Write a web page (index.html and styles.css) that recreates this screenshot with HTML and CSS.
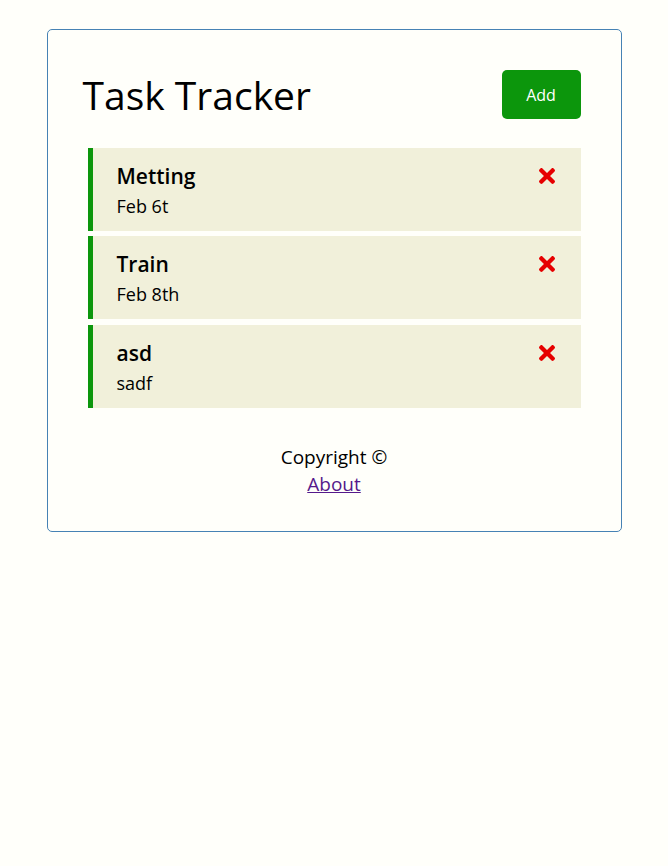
FILE: index.html
```html
<!DOCTYPE html>
<html lang="en">

<head>
    <meta charset="UTF-8" />
    <meta name="viewport" content="width=device-width, initial-scale=1.0" />
    <title>Task Tracker</title>
    <link rel="stylesheet" href="styles.css">
</head>

<body>
    <div class="container">
        <header class="header">
            <h1>Task Tracker</h1>
            <button class="btn">Add</button>
        </header>
        <div class="task">
            <h3>Metting
                <svg class="del" viewBox="0 80 352 352"><path d="M242.72 256l100.07-100.07c12.28-12.28 12.28-32.19 0-44.48l-22.24-22.24c-12.28-12.28-32.19-12.28-44.48 0L176 189.28 75.93 89.21c-12.28-12.28-32.19-12.28-44.48 0L9.21 111.45c-12.28 12.28-12.28 32.19 0 44.48L109.28 256 9.21 356.07c-12.28 12.28-12.28 32.19 0 44.48l22.24 22.24c12.28 12.28 32.2 12.28 44.48 0L176 322.72l100.07 100.07c12.28 12.28 32.2 12.28 44.48 0l22.24-22.24c12.28-12.28 12.28-32.19 0-44.48L242.72 256z"/></svg>
            </h3>
            <p>Feb 6t</p>
        </div>
        <div class="task">
            <h3>Train
                <svg class="del" viewBox="0 80 352 352"><path d="M242.72 256l100.07-100.07c12.28-12.28 12.28-32.19 0-44.48l-22.24-22.24c-12.28-12.28-32.19-12.28-44.48 0L176 189.28 75.93 89.21c-12.28-12.28-32.19-12.28-44.48 0L9.21 111.45c-12.28 12.28-12.28 32.19 0 44.48L109.28 256 9.21 356.07c-12.28 12.28-12.28 32.19 0 44.48l22.24 22.24c12.28 12.28 32.2 12.28 44.48 0L176 322.72l100.07 100.07c12.28 12.28 32.2 12.28 44.48 0l22.24-22.24c12.28-12.28 12.28-32.19 0-44.48L242.72 256z"/></svg>
            </h3>
            <p>Feb 8th</p>
        </div>
        <div class="task">
            <h3>asd
                <svg class="del" viewBox="0 80 352 352"><path d="M242.72 256l100.07-100.07c12.28-12.28 12.28-32.19 0-44.48l-22.24-22.24c-12.28-12.28-32.19-12.28-44.48 0L176 189.28 75.93 89.21c-12.28-12.28-32.19-12.28-44.48 0L9.21 111.45c-12.28 12.28-12.28 32.19 0 44.48L109.28 256 9.21 356.07c-12.28 12.28-12.28 32.19 0 44.48l22.24 22.24c12.28 12.28 32.2 12.28 44.48 0L176 322.72l100.07 100.07c12.28 12.28 32.2 12.28 44.48 0l22.24-22.24c12.28-12.28 12.28-32.19 0-44.48L242.72 256z"/></svg>
            </h3>
            <p>sadf</p>
        </div>
        <footer class="footer">
            <p>Copyright &copy;</p>
            <a href="#about">About</a>
        </footer>
    </div>
</body>

</html>
```

FILE: styles.css
```css
* {
    box-sizing: border-box;
    margin: 0;
    padding: 0;
}

body {
    font-family: "Open Sans", "DejaVu Sans", sans-serif;
    background: #fffffa;
    color: #000;
}

.container {
    width: 575px;
    margin: 29px auto 0;
    padding: 35px 35px 33px;
    border: 1px solid #4682b4;
    border-radius: 5px;
}

.header {
    display: flex;
    justify-content: space-between;
    align-items: center;
    margin-bottom: 24px;
}

.header h1 {
    font-size: 39px;
    font-weight: 500;
    line-height: 58px;
}

.btn {
    margin: 5px;
    width: 79px;
    height: 49px;
    border: none;
    border-radius: 5px;
    background: #0c960c;
    color: #fff;
    font-family: inherit;
    font-size: 16px;
    cursor: pointer;
}

.task {
    margin: 5px;
    height: 83px;
    padding: 14px 26px 0 24px;
    background: #f1f0da;
    border-left: 5px solid #0c960c;
}

.task:nth-of-type(2) {
    margin-bottom: 6px;
}

.task h3 {
    display: flex;
    justify-content: space-between;
    align-items: center;
    font-size: 21px;
    font-weight: 600;
    line-height: 28px;
}

.task p {
    margin-top: 3px;
    font-size: 18px;
    line-height: 26px;
}

.del {
    width: 16px;
    height: 16px;
    fill: #e60000;
    cursor: pointer;
}

.footer {
    margin-top: 36px;
    text-align: center;
    font-size: 19px;
    line-height: 27px;
}

.footer a {
    color: #551a8b;
}
```
